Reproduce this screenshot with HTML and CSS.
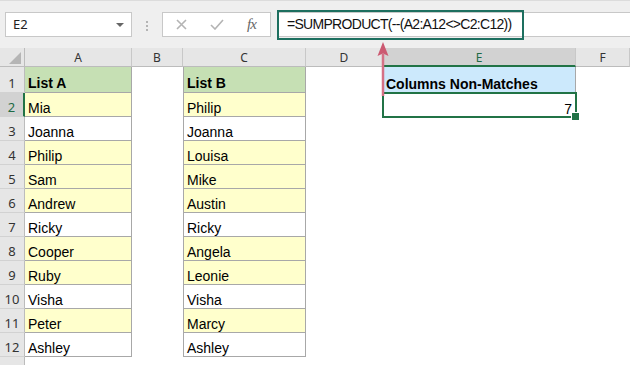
FILE: index.html
```html
<!DOCTYPE html>
<html lang="en">
  <head>
    <meta charset="UTF-8" />
    <title>Columns Non-Matches</title>
    <link rel="stylesheet" href="styles.css">
  </head>
  <body>
    <div class="app">
      <div class="toolbar">
        <div class="namebox">E2<span class="caret"></span></div>
        <div class="grip"><i></i><i></i><i></i></div>
        <div class="fnbox">
          <svg class="ico-x" width="11" height="11" viewBox="0 0 11 11"><path d="M1 1L10 10M10 1L1 10" /></svg>
          <svg class="ico-ok" width="14" height="11" viewBox="0 0 14 11"><path d="M1 6L5 10L13 1" /></svg>
          <span class="fx">fx</span>
        </div>
        <div class="formula"><span class="hl"></span>=SUMPRODUCT(--(A2:A12&lt;&gt;C2:C12))</div>
      </div>

      <div class="sheet">
        <div class="corner"></div>
        <div class="ch">A</div>
        <div class="ch">B</div>
        <div class="ch">C</div>
        <div class="ch">D</div>
        <div class="ch sel">E</div>
        <div class="ch">F</div>

        <div class="rh">1</div>
        <div class="d g">List A</div>
        <div class="c"></div>
        <div class="d g l">List B</div>
        <div class="c"></div>
        <div class="e1">Columns Non-Matches</div>
        <div class="c"></div>

        <div class="rh sel">2</div>
        <div class="d y">Mia</div>
        <div class="c"></div>
        <div class="d y l">Philip</div>
        <div class="c"></div>
        <div class="e2">7</div>
        <div class="c"></div>

        <div class="rh">3</div>
        <div class="d">Joanna</div>
        <div class="c"></div>
        <div class="d l">Joanna</div>
        <div class="c"></div>
        <div class="c"></div>
        <div class="c"></div>

        <div class="rh">4</div>
        <div class="d y">Philip</div>
        <div class="c"></div>
        <div class="d y l">Louisa</div>
        <div class="c"></div>
        <div class="c"></div>
        <div class="c"></div>

        <div class="rh">5</div>
        <div class="d y">Sam</div>
        <div class="c"></div>
        <div class="d y l">Mike</div>
        <div class="c"></div>
        <div class="c"></div>
        <div class="c"></div>

        <div class="rh">6</div>
        <div class="d y">Andrew</div>
        <div class="c"></div>
        <div class="d y l">Austin</div>
        <div class="c"></div>
        <div class="c"></div>
        <div class="c"></div>

        <div class="rh">7</div>
        <div class="d">Ricky</div>
        <div class="c"></div>
        <div class="d l">Ricky</div>
        <div class="c"></div>
        <div class="c"></div>
        <div class="c"></div>

        <div class="rh">8</div>
        <div class="d y">Cooper</div>
        <div class="c"></div>
        <div class="d y l">Angela</div>
        <div class="c"></div>
        <div class="c"></div>
        <div class="c"></div>

        <div class="rh">9</div>
        <div class="d y">Ruby</div>
        <div class="c"></div>
        <div class="d y l">Leonie</div>
        <div class="c"></div>
        <div class="c"></div>
        <div class="c"></div>

        <div class="rh">10</div>
        <div class="d">Visha</div>
        <div class="c"></div>
        <div class="d l">Visha</div>
        <div class="c"></div>
        <div class="c"></div>
        <div class="c"></div>

        <div class="rh">11</div>
        <div class="d y">Peter</div>
        <div class="c"></div>
        <div class="d y l">Marcy</div>
        <div class="c"></div>
        <div class="c"></div>
        <div class="c"></div>

        <div class="rh">12</div>
        <div class="d">Ashley</div>
        <div class="c"></div>
        <div class="d l">Ashley</div>
        <div class="c"></div>
        <div class="c"></div>
        <div class="c"></div>

        <div class="rh">13</div>
        <div class="c"></div>
        <div class="c"></div>
        <div class="c"></div>
        <div class="c"></div>
        <div class="c"></div>
        <div class="c"></div>
      </div>

      <!-- callout arrow from the result up to the formula -->
      <svg class="arrow" width="14" height="56" viewBox="0 0 14 56">
        <path class="shaft" d="M7 14V56" />
        <path class="head" d="M7 2L12.5 16L7 13.5L1.5 16Z" />
      </svg>
    </div>
  </body>
</html>
```

FILE: styles.css
```css
* {
  padding: 0;
  margin: 0;
  box-sizing: border-box;
}

body {
  width: 630px;
  height: 365px;
  overflow: hidden;
  background: #fff;
  font-family: "Liberation Sans", Arial, sans-serif;
}

.app {
  position: relative;
  height: 365px;
}

/* formula bar */

.toolbar {
  height: 48px;
  display: flex;
  align-items: flex-start;
  padding-top: 12px;
  background: #efefef;
  border-top: 1px solid #dcdcdc;
  overflow: hidden;
}

.namebox {
  position: relative;
  margin-left: 5px;
  margin-top: -1px;
  width: 127px;
  height: 25px;
  background: #fff;
  border: 1px solid #c8c8c8;
  padding-left: 7px;
  font-family: "Noto Sans", sans-serif;
  font-size: 13px;
  line-height: 23px;
  color: #222;
}

.caret {
  position: absolute;
  right: 7px;
  top: 10px;
  border-left: 4px solid transparent;
  border-right: 4px solid transparent;
  border-top: 4px solid #666;
}

.grip {
  width: 30px;
  height: 25px;
  display: flex;
  flex-direction: column;
  align-items: center;
  justify-content: center;
  gap: 2px;
}

.grip i {
  width: 2px;
  height: 2px;
  background: #b4b4b4;
}

.fnbox {
  width: 109px;
  height: 25px;
  margin-top: -1px;
  background: #fff;
  border: 1px solid #c8c8c8;
  display: flex;
  align-items: center;
}

.fnbox svg {
  fill: none;
  stroke: #b4b4b4;
  stroke-width: 1.6;
}

.ico-x {
  margin-left: 13px;
}

.ico-ok {
  margin-left: 23px;
}

.fx {
  margin-left: 23px;
  font-family: "Liberation Serif", serif;
  font-style: italic;
  font-size: 15px;
  color: #666;
  letter-spacing: -1px;
}

.formula {
  position: relative;
  flex: 1;
  margin-left: 6px;
  margin-right: -4px;
  margin-top: -1px;
  height: 25px;
  background: #fff;
  border: 1px solid #c8c8c8;
  padding-left: 9px;
  font-size: 14px;
  line-height: 23px;
  letter-spacing: -0.7px;
  color: #111;
}

.formula .hl {
  position: absolute;
  left: -1px;
  top: -3px;
  width: 247px;
  height: 30px;
  border: 2px solid #1d6f5f;
}

/* sheet */

.sheet {
  display: grid;
  grid-template-columns: 25px 107px 51px 123px 77px 193px 1fr;
  grid-template-rows: 19px 26px repeat(12, 24px);
}

.corner {
  position: relative;
  background: #e6e6e6;
  border-right: 1px solid #bcbcbc;
  border-bottom: 1px solid #bcbcbc;
}

.corner::after {
  content: "";
  position: absolute;
  right: 3px;
  bottom: 2px;
  width: 12px;
  height: 12px;
  background: #b5b5b5;
  clip-path: polygon(100% 0, 100% 100%, 0 100%);
}

.ch {
  background: #e6e6e6;
  border-right: 1px solid #c8c8c8;
  border-bottom: 1px solid #bcbcbc;
  text-align: center;
  font-family: "Noto Sans", sans-serif;
  font-size: 12px;
  line-height: 19px;
  color: #333;
}

.ch.sel {
  background: #d2d2d2;
  border-bottom: 2px solid #217346;
  color: #1e6b45;
}

.rh {
  background: #e6e6e6;
  border-right: 1px solid #bcbcbc;
  border-bottom: 1px solid #d2d2d2;
  display: flex;
  align-items: flex-end;
  justify-content: center;
  font-family: "Noto Sans", sans-serif;
  font-size: 13px;
  line-height: 17px;
  color: #333;
}

.rh.sel {
  background: #d2d2d2;
  border-right: 2px solid #217346;
  color: #1e6b45;
}

.c {
  background: #fff;
}

.d,
.e1,
.e2 {
  display: flex;
  align-items: flex-end;
  padding: 0 3px;
  font-size: 14px;
  line-height: 15px;
  color: #000;
  white-space: nowrap;
}

.d {
  background: #fff;
  border-right: 1px solid #a8a8a8;
  border-bottom: 1px solid #a8a8a8;
}

.d.l {
  border-left: 1px solid #a8a8a8;
}

.d.y {
  background: #ffffcc;
}

.d.g {
  background: #c6e0b4;
  font-weight: bold;
  padding-bottom: 1px;
}

.e1 {
  background: #cce9fc;
  border-right: 1px solid #a8a8a8;
  font-weight: bold;
  padding-bottom: 1px;
}

.e2 {
  position: relative;
  justify-content: flex-end;
  padding-right: 4px;
  box-shadow: 0 0 0 1px #217346, inset 0 0 0 1px #217346;
}

.e2::after {
  content: "";
  position: absolute;
  right: -4px;
  bottom: -4px;
  width: 7px;
  height: 7px;
  background: #217346;
  border: 1px solid #fff;
}

.arrow {
  position: absolute;
  left: 376px;
  top: 40px;
}

.arrow .shaft {
  stroke: #d57186;
  stroke-width: 2.5;
}

.arrow .head {
  fill: #cc5a72;
}
```
